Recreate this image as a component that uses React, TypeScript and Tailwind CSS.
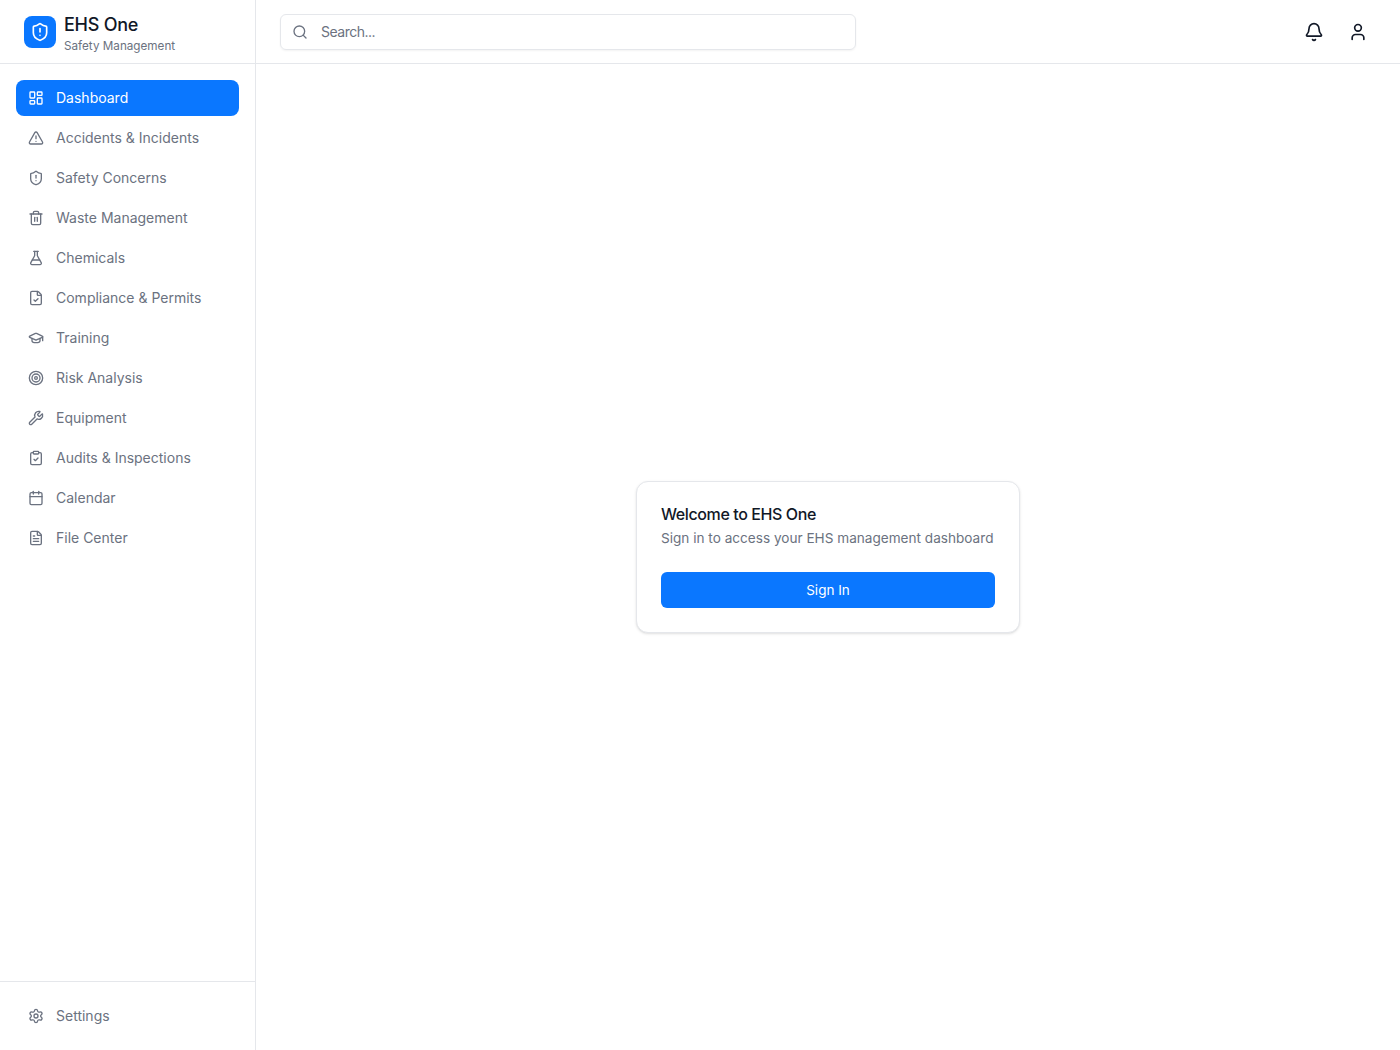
import {
  LayoutDashboard,
  TriangleAlert,
  ShieldAlert,
  Trash2,
  FlaskConical,
  FileCheck,
  GraduationCap,
  Target,
  Wrench,
  ClipboardCheck,
  Calendar,
  FileText,
  Settings,
  Search,
  Bell,
  User,
} from "lucide-react";

const navItems = [
  { label: "Dashboard", icon: LayoutDashboard, active: true },
  { label: "Accidents & Incidents", icon: TriangleAlert },
  { label: "Safety Concerns", icon: ShieldAlert },
  { label: "Waste Management", icon: Trash2 },
  { label: "Chemicals", icon: FlaskConical },
  { label: "Compliance & Permits", icon: FileCheck },
  { label: "Training", icon: GraduationCap },
  { label: "Risk Analysis", icon: Target },
  { label: "Equipment", icon: Wrench },
  { label: "Audits & Inspections", icon: ClipboardCheck },
  { label: "Calendar", icon: Calendar },
  { label: "File Center", icon: FileText },
];

export default function App() {
  return (
    <div className="flex h-[1050px] bg-white font-['Inter',sans-serif] overflow-hidden">
      {/* Sidebar */}
      <aside className="flex flex-col w-[256px] shrink-0 border-r border-[#e5e7eb]">
        <div className="flex items-center gap-2 h-[64px] shrink-0 px-6 border-b border-[#e5e7eb]">
          <div className="flex items-center justify-center w-8 h-8 rounded-lg bg-[#0a77ff] text-white">
            <ShieldAlert size={20} />
          </div>
          <div>
            <div className="h-7 pt-px text-[18px] leading-7 font-medium tracking-[-0.25px] text-[#111827]">EHS One</div>
            <div className="text-[11.7px] leading-4 text-[#6b7280]">Safety Management</div>
          </div>
        </div>

        <nav className="flex flex-col flex-1 gap-1 p-4">
          {navItems.map((item) => (
            <a
              key={item.label}
              className={
                item.active
                  ? "flex items-center gap-3 h-9 px-3 rounded-lg bg-[#0a77ff] text-white text-[14px]"
                  : "flex items-center gap-3 h-9 px-3 rounded-lg text-[#6b7280] text-[14px]"
              }
            >
              <item.icon size={16} />
              <span className="pb-0.5">{item.label}</span>
            </a>
          ))}
        </nav>

        <div className="p-4 border-t border-[#e5e7eb]">
          <a className="flex items-center gap-3 h-9 px-3 rounded-lg text-[#6b7280] text-[14px]">
            <Settings size={16} />
            <span className="pb-0.5">Settings</span>
          </a>
        </div>
      </aside>

      <div className="flex flex-col flex-1 min-w-0">
        {/* Header */}
        <header className="flex items-center justify-between h-[64px] shrink-0 px-6 border-b border-[#e5e7eb]">
          <div className="flex items-center gap-[13px] w-[576px] h-9 pl-[11px] rounded-md border border-[#e5e7eb] shadow-xs">
            <Search size={16} className="text-[#6b7280]" />
            <span className="text-[14px] tracking-[-0.5px] text-[#6b7280]">Search...</span>
          </div>
          <div className="flex items-center gap-2">
            <button className="flex items-center justify-center w-9 h-9 text-[#111827]">
              <Bell size={20} />
            </button>
            <button className="flex items-center justify-center w-9 h-9 text-[#111827]">
              <User size={20} />
            </button>
          </div>
        </header>

        {/* Main */}
        <main className="flex flex-1 items-center justify-center">
          <div className="w-[384px] p-6 rounded-xl border border-[#e5e7eb] shadow-sm bg-white">
            <h2 className="text-[16px] leading-4 font-medium tracking-[-0.4px] text-[#111827]">Welcome to EHS One</h2>
            <p className="mt-1.5 text-[13.6px] leading-5 whitespace-nowrap text-[#6b7280]">Sign in to access your EHS management dashboard</p>
            <button className="w-full h-9 mt-6 rounded-md bg-[#0a77ff] text-white text-[13.5px]">Sign In</button>
          </div>
        </main>
      </div>
    </div>
  );
}
